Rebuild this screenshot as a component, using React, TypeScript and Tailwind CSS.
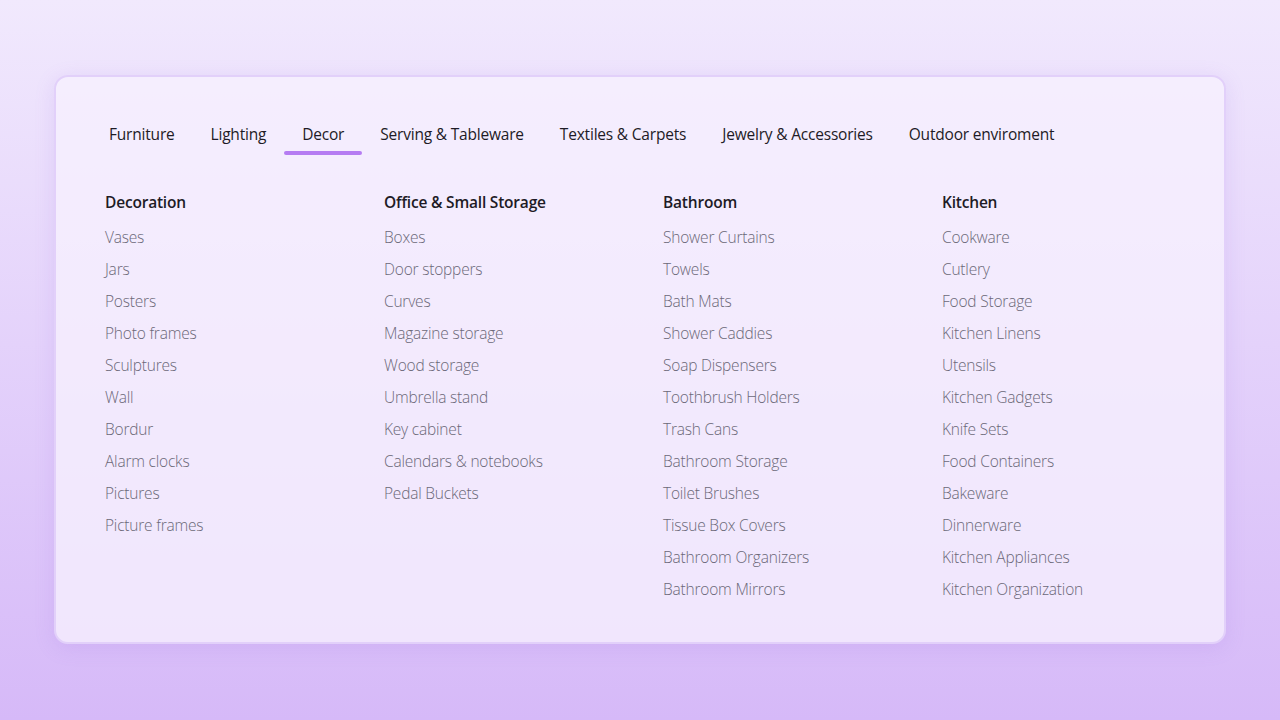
const tabs = ["Furniture", "Lighting", "Decor", "Serving & Tableware", "Textiles & Carpets", "Jewelry & Accessories", "Outdoor enviroment"];

const columns: { title: string; items: string[] }[] = [
  { title: "Decoration", items: ["Vases", "Jars", "Posters", "Photo frames", "Sculptures", "Wall", "Bordur", "Alarm clocks", "Pictures", "Picture frames"] },
  { title: "Office & Small Storage", items: ["Boxes", "Door stoppers", "Curves", "Magazine storage", "Wood storage", "Umbrella stand", "Key cabinet", "Calendars & notebooks", "Pedal Buckets"] },
  { title: "Bathroom", items: ["Shower Curtains", "Towels", "Bath Mats", "Shower Caddies", "Soap Dispensers", "Toothbrush Holders", "Trash Cans", "Bathroom Storage", "Toilet Brushes", "Tissue Box Covers", "Bathroom Organizers", "Bathroom Mirrors"] },
  { title: "Kitchen", items: ["Cookware", "Cutlery", "Food Storage", "Kitchen Linens", "Utensils", "Kitchen Gadgets", "Knife Sets", "Food Containers", "Bakeware", "Dinnerware", "Kitchen Appliances", "Kitchen Organization"] },
];

export default function App() {
  return (
    <div
      className="w-[1280px] h-[720px] bg-gradient-to-b from-[#f1e9fd] to-[#d6b9f8] pt-[75px] px-[54px]"
      style={{ fontFamily: '"Open Sans", sans-serif' }}
    >
      <div className="h-[569px] rounded-[14px] border-2 border-[#e2d0fa] bg-[#f6f0fe]/80 shadow-[0_4px_20px_rgba(150,100,220,0.15)] pt-[44px] px-[35px]">
        <div className="flex">
          {tabs.map((t) => (
            <div key={t} className="relative px-[18px] h-[34px] text-[15.5px] text-[#1e1b26] leading-[26px] tracking-[-0.2px]">
              {t}
              {t === "Decor" && <div className="absolute left-0 right-0 bottom-0 h-[4px] rounded-full bg-[#b57cf2]" />}
            </div>
          ))}
        </div>
        <div className="grid grid-cols-[279px_279px_279px_279px] pl-[14px] mt-[34px]">
          {columns.map((c) => (
            <div key={c.title}>
              <div className="text-[15.5px] font-semibold text-[#1e1b26] leading-[26px] tracking-[-0.2px]">{c.title}</div>
              <div className="mt-[6px] flex flex-col">
                {c.items.map((i) => (
                  <div key={i} className="text-[15.5px] font-light text-[#6b6878] leading-[32px] tracking-[-0.2px]">{i}</div>
                ))}
              </div>
            </div>
          ))}
        </div>
      </div>
    </div>
  );
}
